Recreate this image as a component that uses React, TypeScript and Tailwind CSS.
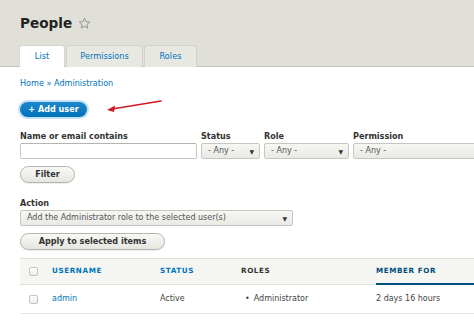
import { useState } from "react";

const font = { fontFamily: '"DejaVu Sans", Verdana, sans-serif' };

function Select({ label, width, arrow = true }: { label: string; width: string; arrow?: boolean }) {
  return (
    <div
      className={`${width} h-[16px] flex items-center justify-between pl-[6px] pr-[5px] border border-[#c6c6c2] rounded-[2px] bg-gradient-to-b from-[#f6f6f3] to-[#e9e9e5] text-[#555] text-[8px]`}
    >
      <span className="whitespace-nowrap">{label}</span>
      {arrow && <span className="text-[6px] text-[#333]">▼</span>}
    </div>
  );
}

function Field({ label, children }: { label: string; children: React.ReactNode }) {
  return (
    <div className="flex flex-col gap-[1px]">
      <span className="text-[8.1px] font-bold text-[#333] whitespace-nowrap leading-[12px]">{label}</span>
      {children}
    </div>
  );
}

function GrayButton({ children, width }: { children: React.ReactNode; width: string }) {
  return (
    <button
      className={`${width} h-[17px] rounded-full border border-[#b5b5b0] bg-gradient-to-b from-[#f8f8f5] to-[#e6e6e1] text-[8.1px] font-bold text-[#333] shadow-[0_1px_1px_rgba(0,0,0,0.08)] flex items-center justify-center`}
    >
      {children}
    </button>
  );
}

function Checkbox() {
  return <span className="block w-[9px] h-[9px] rounded-[2px] border border-[#c4c4c4] bg-gradient-to-b from-white to-[#ececec]" />;
}

export default function App() {
  const [tab] = useState("List");
  const tabs = [
    { name: "List", w: "w-[46px]" },
    { name: "Permissions", w: "w-[77px]" },
    { name: "Roles", w: "w-[53px]" },
  ];

  return (
    <div className="relative w-[474px] h-[322px] overflow-hidden bg-white" style={font}>
      {/* header */}
      <div className="h-[67px] bg-[#e0e0d8] border-b border-[#c4c4bc] px-[19px] flex flex-col justify-between">
        <div className="flex items-center gap-[6px] pt-[13px] pl-[1px]">
          <h1 className="text-[13.6px] font-bold text-[#232323] leading-[20px]">People</h1>
          <svg width="13" height="13" viewBox="0 0 24 24" fill="none" stroke="#8a8a86" strokeWidth="1.6" strokeLinejoin="round">
            <path d="M12 2.5l2.9 6.2 6.6.7-5 4.5 1.4 6.6L12 17.1l-5.9 3.4 1.4-6.6-5-4.5 6.6-.7z" />
          </svg>
        </div>
        <div className="flex gap-[1px] -mb-[1px]">
          {tabs.map((t) => (
            <div
              key={t.name}
              className={`${t.w} h-[22px] flex items-center justify-center rounded-t-[3px] text-[8.2px] text-[#0074bd] ${
                t.name === tab ? "bg-white border border-b-0 border-[#d6d6d0]" : "bg-[#e8e8e2] border border-b-0 border-[#d2d2cb]"
              }`}
            >
              {t.name}
            </div>
          ))}
        </div>
      </div>

      <div className="px-[20px]">
        <div className="pt-[10px] text-[8.1px] text-[#0074bd] leading-[12px]">
          Home » Administration
        </div>

        <div className="pt-[13px]">
          <button className="w-[67px] h-[15px] rounded-full bg-gradient-to-b from-[#1b87cf] to-[#0071b8] text-white text-[8.1px] font-bold flex items-center justify-center shadow-[0_0_0_2px_rgba(90,170,230,0.35)]">
            + Add user
          </button>
        </div>

        <div className="pt-[13px] flex gap-[4px]">
          <Field label="Name or email contains">
            <div className="w-[177px] h-[16px] border border-[#c6c6c2] border-t-[#b4b4b0] rounded-[2px] bg-white" />
          </Field>
          <Field label="Status">
            <Select label="- Any -" width="w-[59px]" />
          </Field>
          <Field label="Role">
            <Select label="- Any -" width="w-[85px]" />
          </Field>
          <Field label="Permission">
            <Select label="- Any -" width="w-[123px]" arrow={false} />
          </Field>
        </div>

        <div className="pt-[7px]">
          <GrayButton width="w-[55px]">Filter</GrayButton>
        </div>

        <div className="pt-[14px]">
          <Field label="Action">
            <Select label="Add the Administrator role to the selected user(s)" width="w-[273px]" />
          </Field>
        </div>

        <div className="pt-[7px]">
          <GrayButton width="w-[145px]">Apply to selected items</GrayButton>
        </div>

        {/* table */}
        <div className="mt-[8px] w-[470px]">
          <div className="grid grid-cols-[32px_108px_81px_135px_1fr] h-[27px] items-center bg-[#f5f5f2] border-t border-b border-[#e0e0da] text-[7.2px] font-bold tracking-[0.6px] uppercase">
            <div className="pl-[9px]"><Checkbox /></div>
            <div className="text-[#0074bd]">Username</div>
            <div className="text-[#0074bd]">Status</div>
            <div className="text-[#333]">Roles</div>
            <div className="h-full flex items-center text-[#004f80] border-b-2 border-[#004f80] -mb-[1px]">Member for</div>
          </div>
          <div className="grid grid-cols-[32px_108px_81px_135px_1fr] h-[29px] items-center border-b border-[#e6e6e2] text-[8px]">
            <div className="pl-[9px]"><Checkbox /></div>
            <div className="text-[#0074bd]">admin</div>
            <div className="text-[#444]">Active</div>
            <div className="text-[#444] pl-[4px] flex gap-[4px]"><span>•</span><span>Administrator</span></div>
            <div className="text-[#444]">2 days 16 hours</div>
          </div>
        </div>
      </div>

      {/* annotation arrow */}
      <svg className="absolute left-[104px] top-[98px]" width="60" height="16" viewBox="0 0 60 16">
        <line x1="57" y1="3" x2="8" y2="11" stroke="#d11a22" strokeWidth="1.6" strokeLinecap="round" />
        <path d="M3 12 L11 7.5 L10 14 Z" fill="#d11a22" />
      </svg>
    </div>
  );
}
